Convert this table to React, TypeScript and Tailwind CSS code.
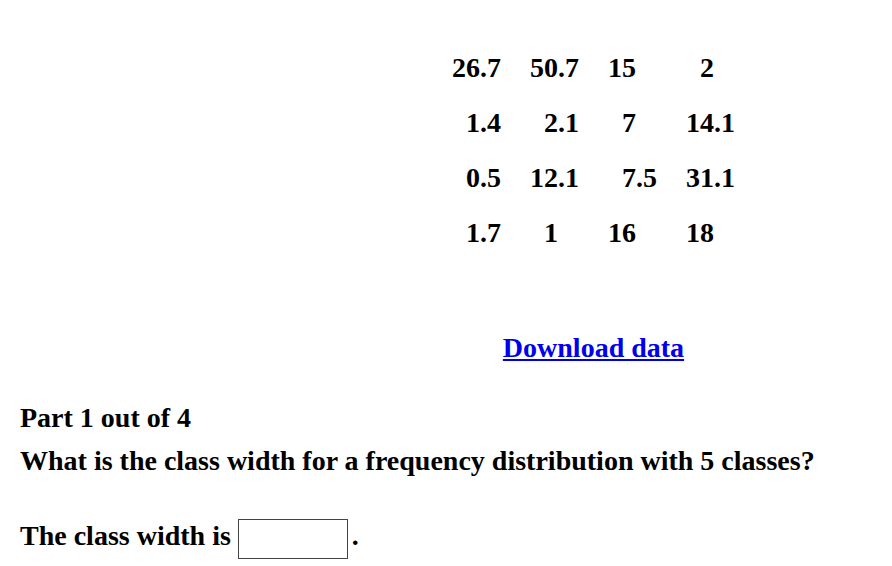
import React from "react";

const rows: string[][] = [
  ["26.7", "50.7", "15", "2"],
  ["1.4", "2.1", "7", "14.1"],
  ["0.5", "12.1", "7.5", "31.1"],
  ["1.7", "1", "16", "18"],
];

function Cell({ v }: { v: string }) {
  const i = v.indexOf(".");
  const intPart = i >= 0 ? v.slice(0, i) : v;
  const frac = i >= 0 ? v.slice(i) : "";
  return (
    <div className="flex">
      <span className="w-[28px] text-right">{intPart}</span>
      <span className="w-[21px] text-left">{frac}</span>
    </div>
  );
}

export default function App() {
  return (
    <div className="w-[892px] h-[566px] bg-white text-black font-bold text-[28px] font-['Liberation_Serif',_'Times_New_Roman',_serif] overflow-hidden">
      <div className="pl-[295px] pt-[40px] flex flex-col items-center">
        <div className="grid grid-cols-4 gap-x-[29px] leading-[55px]">
          {rows.map((r, ri) =>
            r.map((v, ci) => <Cell key={ri + "-" + ci} v={v} />)
          )}
        </div>
        <a href="#" className="mt-[67px] leading-[42px] text-[#0000ee] underline">
          Download data
        </a>
      </div>
      <div className="pl-[20px] mt-[27px]">
        <p className="leading-[43px]">Part 1 out of 4</p>
        <p className="leading-[43px]">
          What is the class width for a frequency distribution with 5 classes?
        </p>
        <p className="leading-[43px] mt-[32px]">
          The class width is{" "}
          <span className="inline-block w-[110px] h-[40px] border border-[#444] align-middle bg-white"></span>
          <span className="ml-[4px]">.</span>
        </p>
      </div>
    </div>
  );
}
